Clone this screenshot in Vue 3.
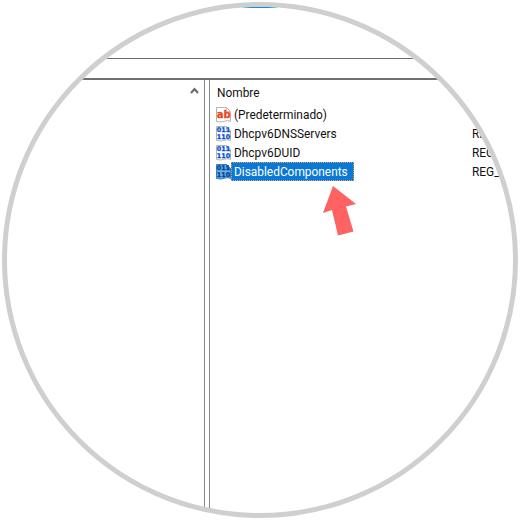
<template>
  <div class="page">
    <div class="lens">
      <div class="toolbar"></div>
      <div class="address"></div>
      <div class="panes">
        <aside class="tree">
          <svg class="caret" width="9" height="7" viewBox="0 0 9 7">
            <path d="M1 6 L4.5 2 L8 6" fill="none" stroke="#666" stroke-width="2" />
          </svg>
        </aside>
        <div class="splitter"></div>
        <section class="list">
          <div class="list-head">Nombre</div>
          <div v-for="row in rows" :key="row.name" class="row">
            <span class="icon" :class="{ picked: row.selected }">
              <svg width="15" height="16" viewBox="0 0 15 16">
                <path class="sheet" d="M0.5 0.5 H10.5 L14.5 4.5 V14.5 Q12 13 9.5 14 Q5 15.8 0.5 14.5 Z" />
                <path class="fold" d="M10.5 0.5 V4.5 H14.5" />
                <text v-if="row.kind === 'sz'" x="0.8" y="11" class="glyph-ab">ab</text>
                <template v-else>
                  <text x="0.8" y="6.4" class="glyph-bin">011</text>
                  <text x="0.8" y="13" class="glyph-bin">110</text>
                </template>
              </svg>
            </span>
            <span class="name-cell">
              <span class="name" :class="{ selected: row.selected }">{{ row.name }}</span>
            </span>
            <span class="type">{{ row.type }}</span>
          </div>
        </section>
      </div>
    </div>
    <div class="title-glint"></div>
    <svg class="pointer" width="36" height="52" viewBox="0 0 36 52">
      <polygon points="11,0 34,18 24,20.5 31.5,45.5 16,49.5 10,24 1,27" fill="#ff6262" />
    </svg>
  </div>
</template>

<script setup>
const rows = [
  { name: "(Predeterminado)", type: "REG_SZ", kind: "sz" },
  { name: "Dhcpv6DNSServers", type: "REG_BINARY", kind: "bin" },
  { name: "Dhcpv6DUID", type: "REG_BINARY", kind: "bin" },
  { name: "DisabledComponents", type: "REG_DWORD", kind: "bin", selected: true },
];
</script>

<style>
html,
body {
  margin: 0;
  background: #fff;
}
</style>

<style scoped>
.page {
  position: relative;
  width: 520px;
  height: 520px;
  padding: 2px;
  box-sizing: border-box;
  font-family: Roboto, "Open Sans", sans-serif;
  font-size: 11.9px;
  color: #111;
}

.lens {
  width: 516px;
  height: 516px;
  box-sizing: border-box;
  border: 5px solid #cfcfcf;
  border-radius: 50%;
  overflow: hidden;
  background: #fff;
  display: flex;
  flex-direction: column;
}

.title-glint {
  position: absolute;
  left: 243px;
  top: 7px;
  width: 34px;
  height: 1px;
  background: linear-gradient(90deg, #a8d4d8, #1a8ccf 25%, #1a8ccf 75%, #a8d4d8);
}

.toolbar {
  height: 52px;
  flex: none;
  box-sizing: border-box;
  border-bottom: 1px solid #6e6e6e;
}

.address {
  height: 21px;
  flex: none;
  box-sizing: border-box;
  border-bottom: 2px solid #6e7072;
}

.panes {
  flex: 1;
  display: flex;
  min-height: 0;
}

.tree {
  width: 198px;
  flex: none;
  box-sizing: border-box;
  border-right: 1px solid #80868a;
  display: flex;
  justify-content: flex-end;
  align-items: flex-start;
  padding: 7px 5px 0 0;
}

.splitter {
  width: 5px;
  flex: none;
  box-sizing: border-box;
  border-right: 1px solid #80868a;
}

.list {
  flex: 1;
  min-width: 0;
}

.list-head {
  height: 25px;
  padding-left: 7px;
  line-height: 27px;
}

.row {
  height: 19px;
  display: flex;
  align-items: center;
  padding-left: 6px;
  white-space: nowrap;
}

.icon {
  width: 15px;
  height: 16px;
  flex: none;
  display: block;
}

.icon svg {
  display: block;
  overflow: hidden;
}

.sheet {
  fill: #fff;
  stroke: #b4b4b4;
}

.fold {
  fill: none;
  stroke: #c8c8c8;
}

.icon.picked .sheet {
  fill: #62b0ec;
  stroke: #2a84d4;
}

.icon.picked .fold {
  stroke: #2a84d4;
}

.glyph-ab {
  font-family: "DejaVu Sans", sans-serif;
  font-size: 10px;
  font-weight: 700;
  fill: #f0441a;
  stroke: #f0441a;
  stroke-width: 0.3;
}

.glyph-bin {
  font-family: "DejaVu Sans", sans-serif;
  font-size: 6.4px;
  font-weight: 700;
  fill: #0050d8;
  stroke: #0050d8;
  stroke-width: 0.3;
}

.icon.picked .glyph-bin {
  fill: #0a3f8c;
  stroke: #0a3f8c;
}

.name-cell {
  width: 241px;
  height: 19px;
  flex: none;
  display: block;
}

.name {
  display: inline-block;
  box-sizing: border-box;
  height: 19px;
  line-height: 21px;
  padding-left: 3px;
  vertical-align: top;
}

.name.selected {
  padding: 0 5px 0 2px;
  color: #fff;
  line-height: 19px;
  background: #0a78d7;
  border: 1px dotted #e8a050;
}

.type {
  flex: none;
  height: 19px;
  line-height: 21px;
}

.pointer {
  position: absolute;
  left: 322px;
  top: 186px;
}
</style>
